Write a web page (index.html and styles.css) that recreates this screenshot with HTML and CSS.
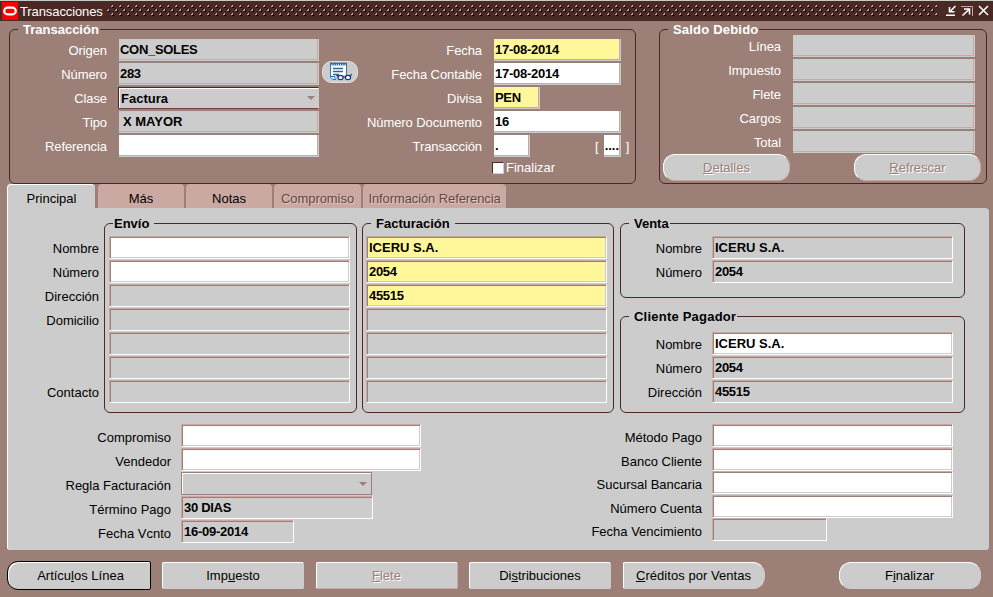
FILE: index.html
```html
<!DOCTYPE html>
<html lang="es">
<head>
<meta charset="utf-8">
<title>Transacciones</title>
<link rel="stylesheet" href="styles.css">
</head>
<body>
<div class="window">
  <header class="titlebar">
    <svg class="logo" width="16" height="18" viewBox="0 0 16 18"><rect width="16" height="18" fill="#f00"/><rect x="2.200" y="5.700" width="11.600" height="6.600" rx="3.300" fill="none" stroke="#fff" stroke-width="2.200"/></svg>
    <span class="title">Transacciones</span>
    <svg class="grip" height="14" shape-rendering="crispEdges"><defs><pattern id="dots" width="8" height="8" patternUnits="userSpaceOnUse"><path d="M1 6h2v2H1zM5 2h2v2H5z" fill="#000"/><path d="M1 6h1v1H1zM5 2h1v1H5zM0 6h1v1H0zM4 2h1v1H4zM1 5h1v1H1zM5 1h1v1H5z" fill="#cba9a3"/></pattern></defs><rect width="830" height="13" fill="url(#dots)"/></svg>
    <svg class="controls" width="44" height="16" viewBox="0 0 44 16" fill="none" stroke="#fff" stroke-width="1.600"><path d="M1 13.200h9M10.500 4 5.500 9M4.500 5v4.700H9.500"/><path d="M16 4.500H27.500V14" stroke="#cba9a3" stroke-width="1"/><path d="M17.500 13.500 24 7.500M19 7H24.500V12.500"/><path d="M34 4l9 9M43 4l-9 9"/></svg>
  </header>

  <section class="top">
    <div class="group dark transaction">
      <h2>Transacción</h2>
      <div class="form tx-left">
        <label>Origen</label><div class="field"><b class="squeeze">CON_SOLES</b></div>
        <label>Número</label><div class="field"><b class="squeeze">283</b></div>
        <label>Clase</label><div class="field select"><b>Factura</b><i></i></div>
        <label>Tipo</label><div class="field indent"><b>X MAYOR</b></div>
        <label>Referencia</label><div class="field white"></div>
      </div>
      <div class="lookup">
        <svg width="36" height="22" viewBox="0 0 36 22"><rect x=".5" y=".5" width="35" height="21" rx="9" fill="#ccc" stroke="#e8e0de"/><path d="M8.500 2.500h16v16H11l-2.500-2z" fill="#fff" stroke="#3d78a8"/><path d="M8 3h17" stroke="#2868a0" stroke-width="3" stroke-dasharray="1.500 .7"/><path d="M11 7.500h10M11 10.500h10M11 13.500h6" stroke="#2868a0" stroke-width="1.300"/><path d="M8.500 15.500H13v3" stroke="#2868a0" fill="none"/><path d="M14 14h17v6H14z" fill="#ccc"/><g fill="#fff" stroke="#16347c" stroke-width="1.200"><ellipse cx="18.500" cy="16.500" rx="2.600" ry="2.200"/><ellipse cx="26" cy="16.500" rx="2.600" ry="2.200"/><path d="M14.500 14l1.800 1.300M21.200 16h2M28.200 15l1.500-2" fill="none"/></g></svg>
      </div>
      <div class="form tx-right">
        <label>Fecha</label><div class="field yellow"><b class="date">17-08-2014</b></div>
        <label>Fecha Contable</label><div class="field white"><b class="date">17-08-2014</b></div>
        <label>Divisa</label><div class="field yellow currency"><b class="squeeze">PEN</b></div>
        <label>Número Documento</label><div class="field white"><b class="squeeze">16</b></div>
        <label>Transacción</label>
        <div class="split"><div class="field white dot"><b>.</b></div><span>[</span><div class="field white flex"><b>....</b></div><span>]</span></div>
        <span></span><div class="check"><span class="box"></span>Finalizar</div>
      </div>
    </div>

    <div class="group dark balance">
      <h2>Saldo Debido</h2>
      <div class="form">
        <label>Línea</label><div class="field"></div>
        <label>Impuesto</label><div class="field"></div>
        <label>Flete</label><div class="field"></div>
        <label>Cargos</label><div class="field"></div>
        <label>Total</label><div class="field"></div>
      </div>
      <div class="actions">
        <button class="btn round off"><span><u>D</u>etalles</span></button>
        <button class="btn round off"><span><u>R</u>efrescar</span></button>
      </div>
    </div>
  </section>

  <nav class="tabs">
    <div class="tab active">Principal</div>
    <div class="tab more">Más</div>
    <div class="tab notes">Notas</div>
    <div class="tab off commit">Compromiso</div>
    <div class="tab off info">Información Referencia</div>
  </nav>

  <main class="panel">
    <div class="parties">
      <div class="side-labels">
        <label>Nombre</label><label>Número</label><label>Dirección</label><label>Domicilio</label><label></label><label></label><label>Contacto</label>
      </div>
      <div class="group shipping">
        <h2>Envío</h2>
        <div class="stack">
          <div class="field white"></div><div class="field white"></div><div class="field"></div><div class="field"></div><div class="field"></div><div class="field"></div><div class="field"></div>
        </div>
      </div>
      <div class="group billing">
        <h2>Facturación</h2>
        <div class="stack">
          <div class="field yellow"><b>ICERU S.A.</b></div><div class="field yellow"><b class="squeeze">2054</b></div><div class="field yellow"><b class="squeeze">45515</b></div><div class="field"></div><div class="field"></div><div class="field"></div><div class="field"></div>
        </div>
      </div>
      <div class="customers">
        <div class="group sale">
          <h2>Venta</h2>
          <div class="form">
            <label>Nombre</label><div class="field"><b>ICERU S.A.</b></div>
            <label>Número</label><div class="field"><b class="squeeze">2054</b></div>
          </div>
        </div>
        <div class="group payer">
          <h2>Cliente Pagador</h2>
          <div class="form">
            <label>Nombre</label><div class="field white"><b>ICERU S.A.</b></div>
            <label>Número</label><div class="field"><b class="squeeze">2054</b></div>
            <label>Dirección</label><div class="field"><b class="squeeze">45515</b></div>
          </div>
        </div>
      </div>
    </div>
    <div class="details">
      <div class="form terms">
        <label>Compromiso</label><div class="field white"></div>
        <label>Vendedor</label><div class="field white"></div>
        <label>Regla Facturación</label><div class="field select rule"><i></i></div>
        <label>Término Pago</label><div class="field term"><b class="squeeze">30 DIAS</b></div>
        <label>Fecha Vcnto</label><div class="field due"><b class="date">16-09-2014</b></div>
      </div>
      <div class="form payment">
        <label>Método Pago</label><div class="field white"></div>
        <label>Banco Cliente</label><div class="field white"></div>
        <label>Sucursal Bancaria</label><div class="field white"></div>
        <label>Número Cuenta</label><div class="field white"></div>
        <label>Fecha Vencimiento</label><div class="field expiry"></div>
      </div>
    </div>
  </main>

  <footer class="footer">
    <button class="btn primary"><span>Artícu<u>l</u>os Línea</span></button>
    <button class="btn"><span>Imp<u>u</u>esto</span></button>
    <button class="btn off"><span><u>F</u>lete</span></button>
    <button class="btn"><span>Di<u>s</u>tribuciones</span></button>
    <button class="btn round-right"><span><u>C</u>réditos por Ventas</span></button>
    <button class="btn round finish"><span>F<u>i</u>nalizar</span></button>
  </footer>
</div>
</body>
</html>
```

FILE: styles.css
```css
* { box-sizing: border-box; }

:root {
  --brown: #9c7f77;
  --dark: #4a2823;
  --gray: #ccc;
  --pink: #cba9a3;
  --yellow: #fff799;
}

body {
  margin: 0;
  overflow: hidden;
  background: var(--brown);
  color: #000;
  font: 13px/16px "Liberation Sans", Arial, sans-serif;
}

.window { width: 993px; height: 597px; display: flex; flex-direction: column; }

.titlebar {
  height: 21px;
  flex: none;
  display: flex;
  align-items: center;
  border-top: 1px solid #c8ccc8;
  padding-left: 2px;
  background: var(--dark);
  color: #fff;
}
.title { width: 87px; margin-left: 2px; padding-top: 2px; letter-spacing: -.1px; white-space: nowrap; }
.grip { width: 830px; flex: none; }
.controls { margin: -2px 0 0 8px; flex: none; }

.top { height: 163px; flex: none; display: flex; padding: 8px 0 0 9px; align-items: flex-start; }

.group { position: relative; border: 1px solid var(--dark); border-radius: 6px; }
.group h2 {
  position: absolute;
  left: 8px;
  top: -9px;
  margin: 0;
  padding: 0 1px 0 5px;
  background: var(--gray);
  font-size: 13px;
  line-height: 18px;
  white-space: nowrap;
}
.group.dark h2 { background: var(--brown); }
.dark { color: #fff; }

.form { display: grid; column-gap: 11px; }
.form label { text-align: right; white-space: nowrap; line-height: 26px; }
.dark .form label { line-height: 24px; letter-spacing: -.08px; }

.field {
  display: flex;
  flex: none;
  align-items: center;
  height: 23px;
  padding-left: 2px;
  border: 1px solid #fff;
  border-top-color: var(--pink);
  border-left-color: var(--pink);
  background: var(--gray);
  box-shadow: inset 1px 1px var(--brown), inset -1px -1px #ccc;
  color: #000;
  line-height: 15px;
  white-space: nowrap;
  overflow: hidden;
}
.dark .field {
  height: 22px;
  padding-left: 1px;
  border: solid var(--gray);
  border-width: 0 1px 1px 0;
  box-shadow: inset -1px -1px var(--pink);
}
.field.white { background-color: #fff; }
.field.yellow { background-color: var(--yellow); }
.squeeze { letter-spacing: -.3px; }
.date { letter-spacing: -.25px; }

.field.select {
  justify-content: space-between;
  padding: 0 4px 0 3px;
  border: 1px solid var(--brown);
  box-shadow: inset 1px 1px #fff;
}
.dark .field.select {
  margin-left: -1px;
  padding: 0 3px 0 2px;
  border-color: var(--dark) var(--gray) #694740 var(--dark);
  border-width: 1px;
}
.select i {
  margin-left: auto;
  border: 4px solid transparent;
  border-top-color: var(--brown);
  border-bottom: 0;
}

.transaction { width: 627px; height: 155px; display: flex; align-items: flex-start; padding-top: 9px; }
.transaction h2 { left: 8px; }
.tx-left { grid-template-columns: 97px 200px; grid-auto-rows: 24px; column-gap: 12px; }
.dark .indent { padding-left: 4px; }
.lookup { width: 36px; height: 22px; margin: 22px 0 0 3px; }
.tx-right { grid-template-columns: 124px 127px; grid-auto-rows: 24px; column-gap: 12px; }
.currency { width: 46px; }
.split { display: flex; }
.dot { width: 36px; }
.split span { line-height: 24px; }
.split span:nth-child(2) { margin-left: 65px; }
.flex { width: 17px; margin: 0 5px 0 5px; }
.check { display: flex; align-items: center; margin: -6px 0 0 -2px; }
.box { width: 12px; height: 12px; margin-right: 2px; background: #fff; border: 1px solid var(--dark); border-right-color: var(--gray); border-bottom-color: var(--gray); }

.balance { width: 328px; height: 155px; margin-left: 23px; padding: 5px 0 0 3px; }
.balance .form { grid-template-columns: 118px 182px; grid-auto-rows: 24px; column-gap: 12px; }
.balance h2 { letter-spacing: .2px; }
.actions { display: flex; justify-content: space-between; margin-top: -1px; width: 318px; }

.btn {
  height: 27px;
  padding: 0;
  border: 1px solid #fff;
  border-right-color: var(--gray);
  border-bottom-color: var(--gray);
  border-radius: 2px;
  background: var(--gray);
  color: #000;
  font: inherit;
}
.btn u { text-underline-offset: 1px; }
.btn.round { border-radius: 12px; }
.btn.round-right { border-radius: 2px 12px 12px 2px; }
.btn.off { color: var(--brown); border-right-color: var(--pink); border-bottom-color: var(--pink); text-shadow: 1px 1px #fff; }
.actions .btn { width: 127px; }

.tabs { height: 24px; flex: none; display: flex; align-items: flex-end; padding-left: 7px; }
.tab { height: 24px; background: var(--pink); border-radius: 4px 4px 0 0; text-align: center; line-height: 29px; white-space: nowrap; }
.tab.active { width: 88px; height: 25px; margin-bottom: -1px; background: var(--gray); border: solid #fff; border-width: 1px 0 0 1px; line-height: 27px; }
.tab.more { width: 86px; margin-left: 3px; }
.tab.notes { width: 86px; margin-left: 2px; }
.tab.commit { width: 87px; margin-left: 2px; letter-spacing: -.05px; }
.tab.info { width: 143px; margin-left: 2px; letter-spacing: -.1px; }
.tab.off { color: #694740; text-shadow: 1px 1px #d8c8c4; }

.panel {
  width: 982px;
  height: 342px;
  flex: none;
  margin-left: 7px;
  padding: 15px 0 0 1px;
  background: var(--gray);
  border-left: 1px solid #fff;
  border-radius: 0 4px 3px 3px;
}
.parties { display: flex; height: 201px; }
.side-labels { display: grid; grid-auto-rows: 24px; width: 90px; margin: 13px 5px 0 0; text-align: right; align-content: start; line-height: 26px; }
.shipping { width: 253px; height: 190px; padding: 12px 0 0 4px; }
.shipping h2 { padding-left: 1px; padding-right: 5px; }
.billing { width: 252px; height: 190px; margin-left: 5px; padding: 12px 0 0 3px; }
.billing h2 { padding-right: 5px; }
.stack { display: grid; grid-auto-rows: 24px; width: 241px; }
.customers { width: 345px; margin-left: 6px; }
.customers .form { grid-template-columns: 81px 241px; grid-auto-rows: 24px; column-gap: 10px; }
.sale { height: 75px; padding-top: 12px; }
.payer { height: 97px; margin-top: 18px; padding-top: 15px; }
.payer h2 { letter-spacing: .22px; }
.details { display: flex; }
.details label { line-height: 28px; }
.terms { grid-template-columns: 162px 240px; column-gap: 10px; grid-auto-rows: 24px; align-content: start; }
.rule { width: 191px; }
.term { width: 192px; }
.due { width: 113px; }
.payment { margin-left: 159px; grid-template-columns: 122px 241px; column-gap: 10px; grid-template-rows: 24px 23px 24px 23px 23px; align-content: start; }
.expiry { width: 115px; }

.footer { display: flex; padding: 12px 0 0 7px; align-items: flex-start; gap: 11.5px; }
.footer .btn { width: 142px; }
.footer .primary { width: 144px; height: 29px; margin: -1px -.5px 0 0; padding-left: 3px; border: 1px solid #000; border-radius: 11px 2px 2px 11px; box-shadow: inset 1px 1px #fff; }
.footer .finish { margin-left: 62.5px; }
.footer .round-right { letter-spacing: .05px; }
```
